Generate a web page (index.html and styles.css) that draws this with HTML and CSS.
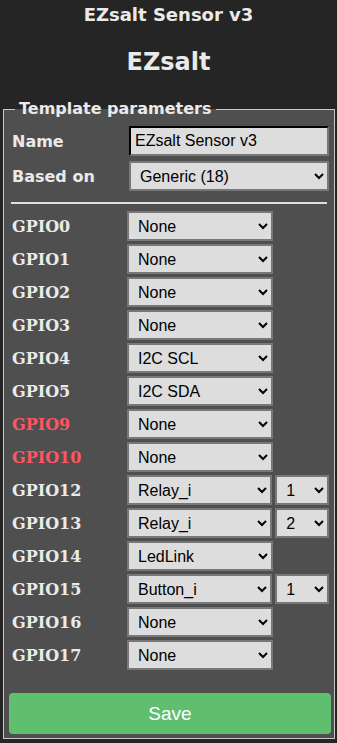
FILE: index.html
```html
<!DOCTYPE html>
<html>
<head>
<meta charset="utf-8">
<link rel="stylesheet" href="styles.css">
</head>
<body>
<div class="head">
  <div class="t1">EZsalt Sensor v3</div>
  <div class="t2">EZsalt</div>
</div>
<fieldset class="fs">
  <legend class="lg">Template parameters</legend>
  <div class="prow"><span class="plabel">Name</span><input class="inp" type="text" value="EZsalt Sensor v3"></div>
  <div class="prow"><span class="plabel">Based on</span><select class="sel wide"><option>Generic (18)</option></select></div>
  <hr class="sep">
  <div class="grows">
    <div class="grow"><span class="glabel">GPIO0</span><select class="sel main"><option>None</option></select></div>
    <div class="grow"><span class="glabel">GPIO1</span><select class="sel main"><option>None</option></select></div>
    <div class="grow"><span class="glabel">GPIO2</span><select class="sel main"><option>None</option></select></div>
    <div class="grow"><span class="glabel">GPIO3</span><select class="sel main"><option>None</option></select></div>
    <div class="grow"><span class="glabel">GPIO4</span><select class="sel main"><option>I2C SCL</option></select></div>
    <div class="grow"><span class="glabel">GPIO5</span><select class="sel main"><option>I2C SDA</option></select></div>
    <div class="grow"><span class="glabel warn">GPIO9</span><select class="sel main"><option>None</option></select></div>
    <div class="grow"><span class="glabel warn">GPIO10</span><select class="sel main"><option>None</option></select></div>
    <div class="grow"><span class="glabel">GPIO12</span><select class="sel main"><option>Relay_i</option></select><select class="sel idx"><option>1</option></select></div>
    <div class="grow"><span class="glabel">GPIO13</span><select class="sel main"><option>Relay_i</option></select><select class="sel idx"><option>2</option></select></div>
    <div class="grow"><span class="glabel">GPIO14</span><select class="sel main"><option>LedLink</option></select></div>
    <div class="grow"><span class="glabel">GPIO15</span><select class="sel main"><option>Button_i</option></select><select class="sel idx"><option>1</option></select></div>
    <div class="grow"><span class="glabel">GPIO16</span><select class="sel main"><option>None</option></select></div>
    <div class="grow"><span class="glabel">GPIO17</span><select class="sel main"><option>None</option></select></div>
  </div>
  <button class="save">Save</button>
</fieldset>
</body>
</html>
```
FILE: styles.css
```css
html, body {
  margin: 0;
  padding: 0;
  background: #252525;
  color: #eaeaea;
  font-family: "DejaVu Sans", Verdana, sans-serif;
}
.head {
  text-align: center;
  font-weight: bold;
}
.t1 {
  font-size: 18px;
  line-height: 22px;
  padding-top: 4px;
}
.t2 {
  font-size: 24px;
  line-height: 30px;
  margin-top: 21px;
}
.fs {
  margin: 23px 0 0 3px;
  width: 332px;
  box-sizing: border-box;
  border: 1px solid #c8c8c8;
  border-radius: 0;
  background: #4f4f4f;
  padding: 8px 5px 4px 5px;
  min-width: 0;
}
.lg {
  font-weight: bold;
  font-size: 16px;
  padding: 0 4px;
  margin-left: 6px;
  line-height: 18px;
}
.prow {
  display: flex;
  align-items: center;
  height: 30px;
  margin-bottom: 5px;
  padding-left: 3px;
}
.plabel {
  font-weight: bold;
  font-size: 16px;
  width: 117px;
  flex: none;
}
.inp {
  width: 200px;
  height: 30px;
  box-sizing: border-box;
  background: #dddddd;
  color: #000;
  border: 2px inset #767676;
  border-color: #2a2a2a #777 #777 #2a2a2a;
  font-family: "Liberation Sans", Arial, sans-serif;
  font-size: 16px;
  padding: 2px 4px;
  margin: 0;
}
.sel {
  height: 30px;
  box-sizing: border-box;
  background: #dddddd;
  color: #000;
  border: 2px solid #777;
  font-family: "Liberation Sans", Arial, sans-serif;
  font-size: 16px;
  padding: 2px 4px 2px 5px;
  margin: 0;
  border-radius: 0;
}
.wide { width: 200px; }
.sep {
  border: 0;
  border-top: 2px solid #e0e0e0;
  margin: 11px 2px 7px 2px;
}
.grows {
  display: flex;
  flex-direction: column;
  gap: 3px;
}
.grow {
  display: flex;
  align-items: center;
  height: 30px;
  padding-left: 3px;
}
.glabel {
  font-family: "DejaVu Serif", Georgia, serif;
  font-weight: bold;
  font-size: 16px;
  width: 115px;
  flex: none;
}
.warn { color: #ff5661; }
.main { width: 146px; }
.idx { width: 54px; margin-left: 3px; }
.save {
  display: block;
  width: 322px;
  height: 41px;
  margin: 23px 0 0 0;
  border: 0;
  border-radius: 4px;
  background: #5fbf6f;
  color: #ffffff;
  font-family: "Liberation Sans", Arial, sans-serif;
  font-size: 19px;
  font-weight: normal;
}
```
